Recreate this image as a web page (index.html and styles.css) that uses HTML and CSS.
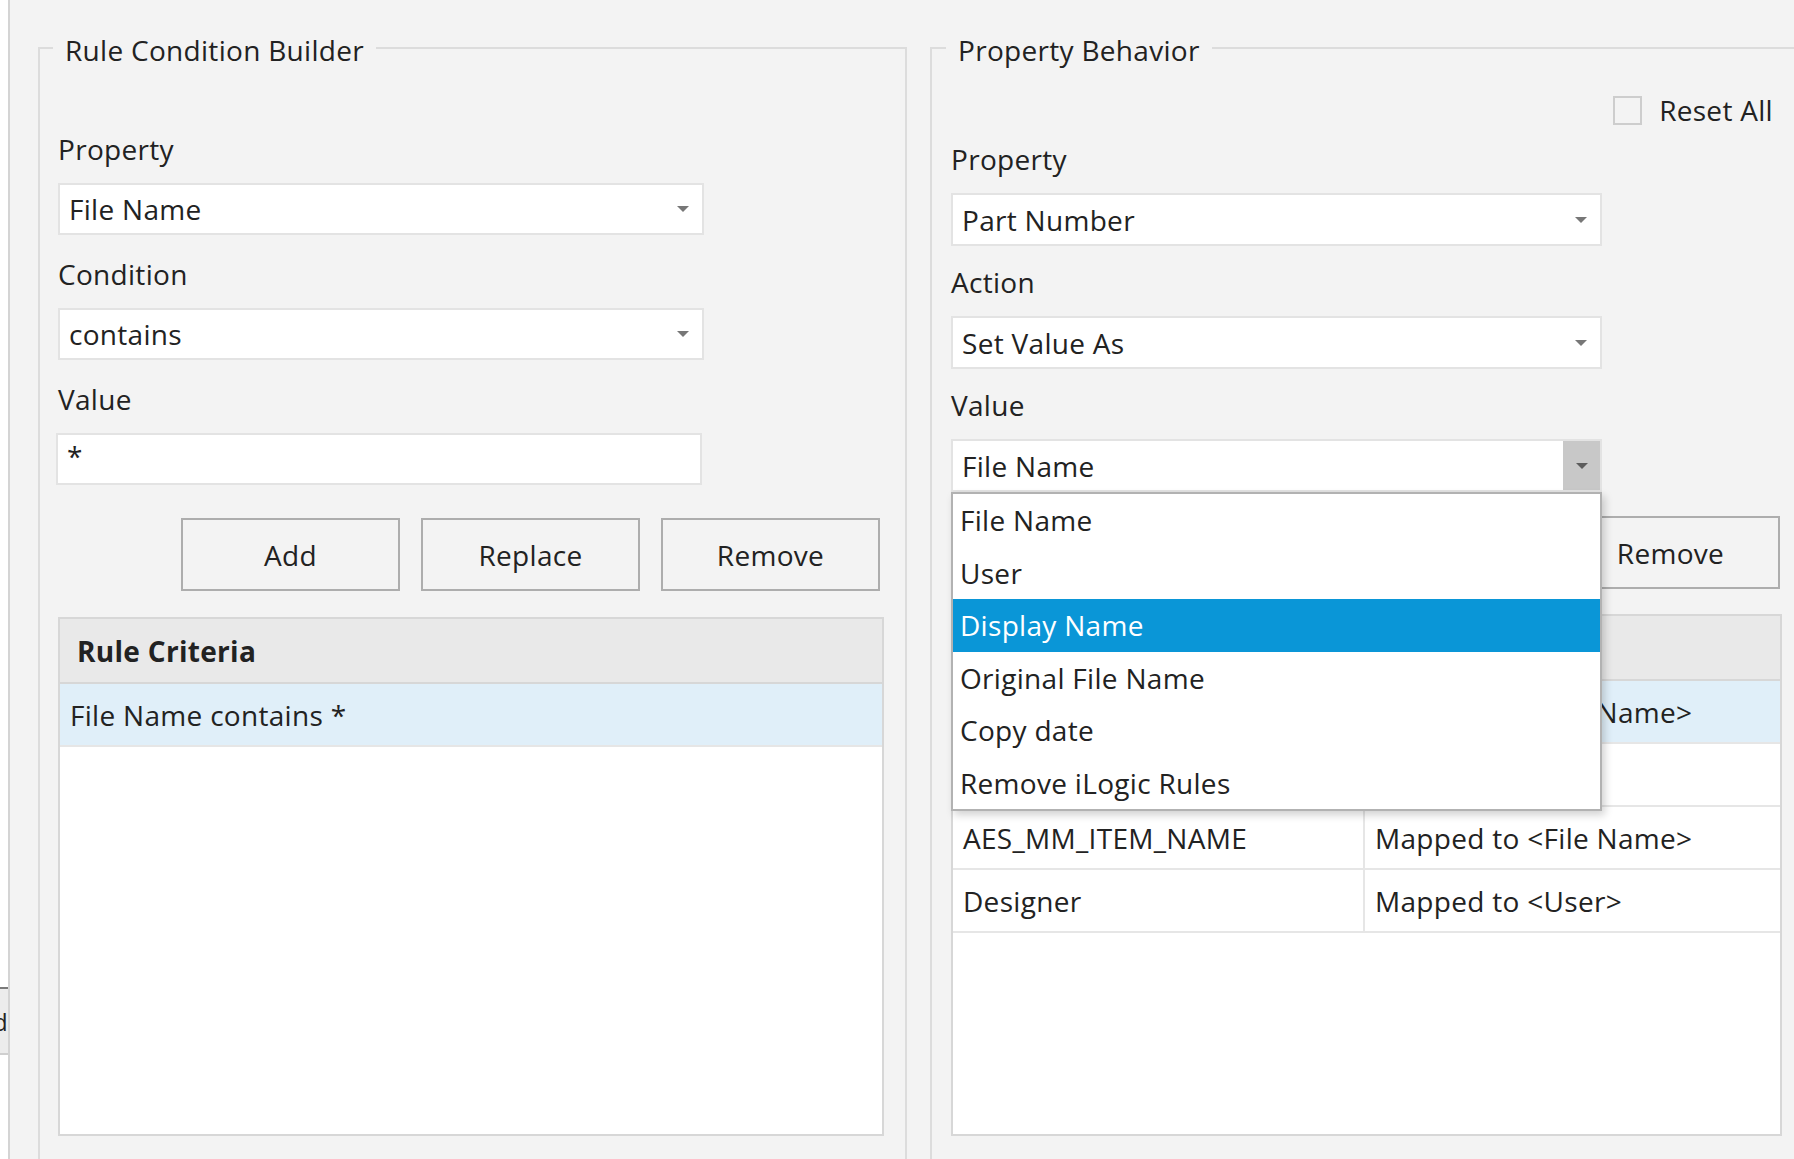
FILE: index.html
```html
<!DOCTYPE html>
<html lang="en">
<head>
    <meta charset="UTF-8">
    <meta name="viewport" content="width=device-width, initial-scale=1.0">
    <title>Rule Editor</title>

    <link rel="stylesheet" href="styles.css">
</head>
<body>
    <div class="side">
        <div class="side-tab"><span>d</span></div>
    </div>

    <div class="window">
        <fieldset class="group group-left">
            <legend>Rule Condition Builder</legend>

            <div class="field-label first">Property</div>
            <div class="select"><span>File Name</span><span class="arrow"></span></div>

            <div class="field-label">Condition</div>
            <div class="select"><span>contains</span><span class="arrow"></span></div>

            <div class="field-label">Value</div>
            <div class="text-input">*</div>

            <div class="button-row">
                <button class="btn">Add</button>
                <button class="btn">Replace</button>
                <button class="btn">Remove</button>
            </div>

            <div class="grid">
                <div class="grid-header">Rule Criteria</div>
                <div class="grid-row selected">File Name contains *</div>
            </div>
        </fieldset>

        <fieldset class="group group-right">
            <legend>Property Behavior</legend>

            <div class="reset-row">
                <span class="checkbox"></span>
                <span>Reset All</span>
            </div>

            <div class="field-label first">Property</div>
            <div class="select"><span>Part Number</span><span class="arrow"></span></div>

            <div class="field-label">Action</div>
            <div class="select"><span>Set Value As</span><span class="arrow"></span></div>

            <div class="field-label">Value</div>
            <div class="dropdown">
                <div class="select open"><span>File Name</span><span class="drop-btn"><span class="arrow"></span></span></div>
                <ul class="dropdown-list">
                    <li>File Name</li>
                    <li>User</li>
                    <li class="active">Display Name</li>
                    <li>Original File Name</li>
                    <li>Copy date</li>
                    <li>Remove iLogic Rules</li>
                </ul>
            </div>

            <div class="button-row">
                <button class="btn">Add</button>
                <button class="btn">Replace</button>
                <button class="btn">Remove</button>
            </div>

            <div class="grid">
                <div class="grid-header two-col">
                    <div class="cell">Property</div>
                    <div class="cell">Behavior</div>
                </div>
                <div class="grid-row two-col selected">
                    <div class="cell">Part Number</div>
                    <div class="cell">Mapped to &lt;File Name&gt;</div>
                </div>
                <div class="grid-row two-col">
                    <div class="cell">Description</div>
                    <div class="cell">Clear Value</div>
                </div>
                <div class="grid-row two-col">
                    <div class="cell">AES_MM_ITEM_NAME</div>
                    <div class="cell">Mapped to &lt;File Name&gt;</div>
                </div>
                <div class="grid-row two-col">
                    <div class="cell">Designer</div>
                    <div class="cell">Mapped to &lt;User&gt;</div>
                </div>
            </div>
        </fieldset>
    </div>
</body>
</html>
```

FILE: styles.css
```css
body {
    margin: 0;
    background-color: white;
    color: #222;
    font-family: "Open Sans", "Noto Sans", sans-serif;
    font-size: 28px;
    letter-spacing: 0.3px;
    display: flex;
    height: 100vh;
    overflow: hidden;
}

.side {
    width: 8px;
    flex-shrink: 0;
    padding-top: 987px;
}

.side-tab {
    height: 64px;
    background-color: #ececec;
    border-top: 2px solid #7a7a7a;
    border-bottom: 2px solid #cfcfcf;
    display: flex;
    justify-content: flex-end;
    align-items: center;
    overflow: hidden;
    white-space: nowrap;
    font-size: 24px;
}

.window {
    flex: 1;
    background-color: #f3f3f3;
    border-left: 2px solid #d4d4d4;
    padding: 27px 0 0 28px;
    display: flex;
    gap: 23px;
    overflow: hidden;
}

.group {
    margin: 0;
    border: 2px solid #dcdcdc;
    box-sizing: border-box;
    height: 1200px;
    flex-shrink: 0;
    min-width: 0;
}

.group legend {
    margin-left: -5px;
    padding: 5px 12px 0;
    line-height: 36px;
}

.group-left {
    width: 869px;
    padding: 0 21px 0 18px;
}

.group-right {
    width: 875px;
    padding: 0 21px 0 19px;
}

.field-label {
    line-height: 36px;
    margin: 21px 0 16px;
}

.group-left .field-label.first {
    margin-top: 63px;
}

.group-right .field-label {
    margin-top: 18px;
}

.group-right .field-label.first {
    margin-top: 13px;
}

.select,
.text-input {
    box-sizing: border-box;
    height: 52px;
    background-color: white;
    border: 2px solid #e3e3e3;
    display: flex;
    align-items: center;
    justify-content: space-between;
    padding-left: 9px;
}

.group-left .select,
.group-left .text-input {
    width: 646px;
}

.group-left .text-input {
    margin-left: -2px;
    align-items: flex-start;
    padding-top: 2px;
}

.group-right .select {
    width: 651px;
    height: 53px;
}

.arrow {
    width: 0;
    height: 0;
    border-left: 6px solid transparent;
    border-right: 6px solid transparent;
    border-top: 6px solid #777;
    margin-right: 13px;
}

.select.open {
    padding-right: 0;
}

.drop-btn {
    align-self: stretch;
    width: 37px;
    background-color: #c8c8c8;
    display: flex;
    align-items: center;
    justify-content: center;
}

.drop-btn .arrow {
    margin-right: 0;
    border-top-color: #5c5c5c;
}

.dropdown {
    position: relative;
}

.dropdown-list {
    position: absolute;
    top: 100%;
    left: 0;
    width: 651px;
    box-sizing: border-box;
    margin: 0;
    padding: 0;
    list-style: none;
    background-color: white;
    border: 2px solid #b2b2b2;
    box-shadow: 3px 4px 8px rgba(0, 0, 0, 0.18);
    z-index: 2;
}

.dropdown-list li {
    height: 52.5px;
    line-height: 52px;
    padding-left: 7px;
}

.dropdown-list li.active {
    background-color: #0a96d7;
    color: white;
}

.reset-row {
    display: flex;
    justify-content: flex-end;
    align-items: center;
    gap: 17px;
    line-height: 36px;
    margin: 24px 9px 0 0;
}

.checkbox {
    width: 25px;
    height: 25px;
    border: 2px solid #cdcdcd;
}

.button-row {
    display: flex;
    justify-content: flex-end;
    gap: 21px;
    margin: 33px 4px 0 0;
}

.group-right .button-row {
    margin-top: 24px;
    margin-right: 2px;
}

.btn {
    width: 219px;
    height: 73px;
    background-color: #f3f3f3;
    border: 2px solid #adadad;
    font-family: inherit;
    font-size: 28px;
    letter-spacing: 0.3px;
    color: #222;
    padding: 0;
}

.grid {
    margin-top: 26px;
    height: 519px;
    box-sizing: border-box;
    background-color: white;
    border: 2px solid #d7d7d7;
}

.group-right .grid {
    margin-top: 25px;
    height: 522px;
}

.grid-header {
    height: 63px;
    background-color: #e9e9e9;
    border-bottom: 2px solid #d7d7d7;
    font-weight: bold;
    display: flex;
    align-items: center;
    padding-left: 17px;
}

.grid-row {
    height: 61px;
    border-bottom: 2px solid #e6e6e6;
    display: flex;
    align-items: center;
    padding-left: 10px;
}

.grid-row.selected {
    background-color: #e0eff9;
}

.two-col {
    padding-left: 0;
    align-items: stretch;
}

.two-col .cell {
    display: flex;
    align-items: center;
    padding-left: 10px;
}

.two-col .cell:first-child {
    width: 400px;
    border-right: 2px solid #e6e6e6;
}
```
